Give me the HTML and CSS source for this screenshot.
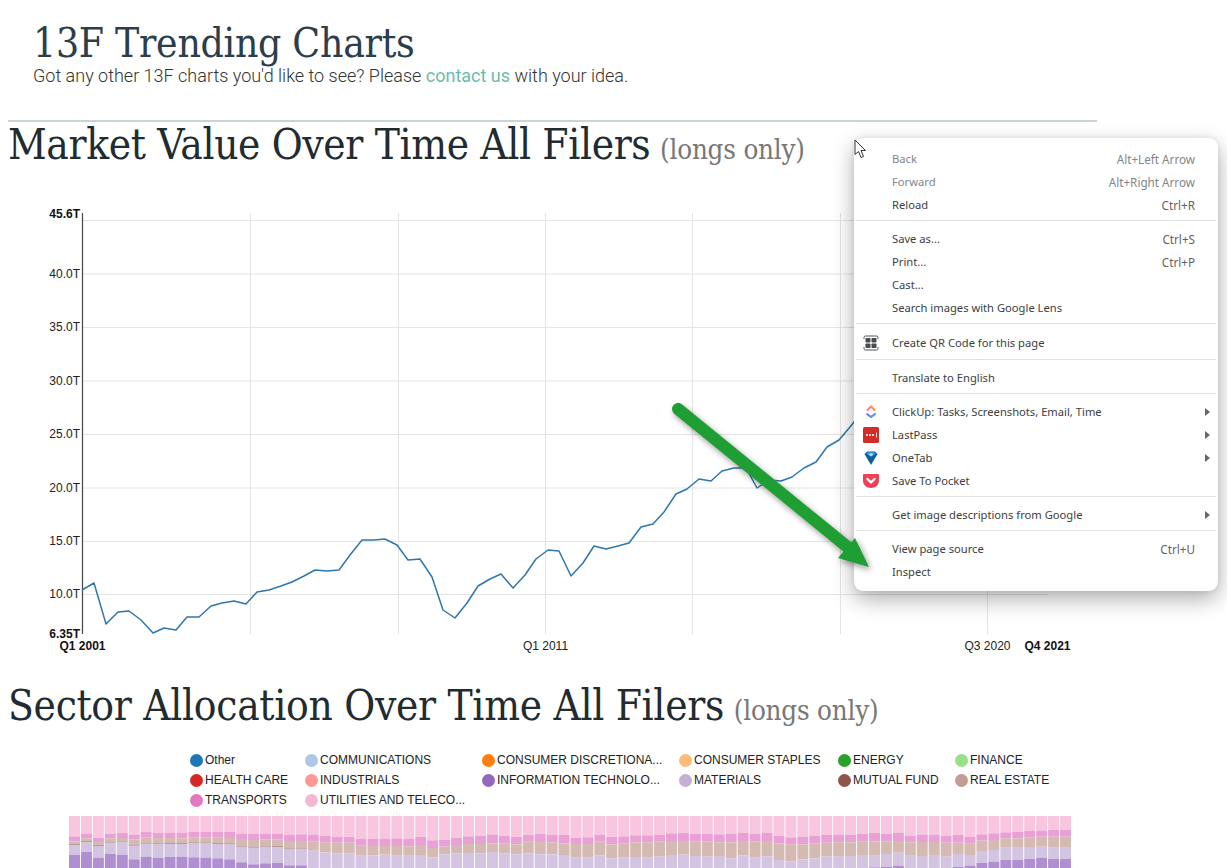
FILE: index.html
```html
<!DOCTYPE html>
<html lang="en">
<head>
<meta charset="utf-8">
<title>13F Trending Charts</title>
<link rel="stylesheet" href="styles.css">
</head>
<body>
<main class="page">
  <header class="intro">
    <h1>13F Trending Charts</h1>
    <p>Got any other 13F charts you'd like to see? Please <a href="#">contact us</a> with your idea.</p>
  </header>
  <hr class="rule">
  <h2 class="section-title">Market Value Over Time All Filers <small>(longs only)</small></h2>
  <svg class="line-chart" viewBox="0 0 1100 465" aria-label="Market value chart">
    <g transform="translate(0,-190)">
      <g class="grid">
        <path d="M82 220.500H1048M82 274H1048M82 327.500H1048M82 381H1048M82 434.500H1048M82 488H1048M82 541.500H1048M82 594.500H1048"/>
        <path d="M250.500 213V634M398.500 213V634M545.500 213V634M692.500 213V634M840.500 213V634M987.500 213V634"/>
      </g>
      <path class="axis" d="M82.500 213V634"/>
      <polyline class="series" points="82,590 94,583 106,624 118,612 129,611 141,620 153,633 164,628 176,630 187,617 199,617 211,606 222,603 234,601 246,604 257,592 269,590 281,586 292,582 304,576 315,570 327,571 339,570 350,555 362,540 374,540 385,539 397,545 408,560 420,559 432,577 443,610 455,618 467,603 478,586 490,579 501,574 513,588 525,575 536,559 548,550 559,551 571,576 583,563 594,546 606,549 618,546 629,543 641,527 653,524 664,512 676,494 687,489 699,479 711,481 722,471 734,468 746,468 757,488 769,480 781,481 792,477 804,468 816,462 827,447 839,440 850,427 862,412 874,400 900,380"/>
      <g class="y-labels">
        <text class="strong" x="80" y="218">45.6T</text>
        <text x="80" y="278">40.0T</text>
        <text x="80" y="331">35.0T</text>
        <text x="80" y="385">30.0T</text>
        <text x="80" y="438">25.0T</text>
        <text x="80" y="492">20.0T</text>
        <text x="80" y="545">15.0T</text>
        <text x="80" y="598">10.0T</text>
        <text class="strong" x="80" y="638">6.35T</text>
      </g>
      <g class="x-labels">
        <text class="strong" x="82.500" y="650">Q1 2001</text>
        <text x="545.500" y="650">Q1 2011</text>
        <text x="987.500" y="650">Q3 2020</text>
        <text class="strong" x="1047.500" y="650">Q4 2021</text>
      </g>
    </g>
  </svg>
  <h2 class="section-title sector">Sector Allocation Over Time All Filers <small>(longs only)</small></h2>
  <ul class="legend">
    <li><i class="c1"></i>Other</li>
    <li><i class="c2"></i>COMMUNICATIONS</li>
    <li><i class="c3"></i>CONSUMER DISCRETIONA...</li>
    <li><i class="c4"></i>CONSUMER STAPLES</li>
    <li><i class="c5"></i>ENERGY</li>
    <li><i class="c6"></i>FINANCE</li>
    <li><i class="c7"></i>HEALTH CARE</li>
    <li><i class="c8"></i>INDUSTRIALS</li>
    <li><i class="c9"></i>INFORMATION TECHNOLO...</li>
    <li><i class="c10"></i>MATERIALS</li>
    <li><i class="c11"></i>MUTUAL FUND</li>
    <li><i class="c12"></i>REAL ESTATE</li>
    <li><i class="c13"></i>TRANSPORTS</li>
    <li><i class="c14"></i>UTILITIES AND TELECO...</li>
  </ul>
  <svg id="bars" class="bars" viewBox="0 0 1227 58" aria-label="Sector allocation chart"></svg>
</main>

<nav class="menu">
  <div class="item off"><span>Back</span><kbd>Alt+Left Arrow</kbd></div>
  <div class="item off"><span>Forward</span><kbd>Alt+Right Arrow</kbd></div>
  <div class="item"><span>Reload</span><kbd>Ctrl+R</kbd></div>
  <div class="sep"></div>
  <div class="item"><span>Save as...</span><kbd>Ctrl+S</kbd></div>
  <div class="item"><span>Print...</span><kbd>Ctrl+P</kbd></div>
  <div class="item"><span>Cast...</span></div>
  <div class="item"><span>Search images with Google Lens</span></div>
  <div class="sep"></div>
  <div class="item tall">
    <svg class="ico" viewBox="0 0 16 16"><path class="qr-frame" d="M1 4V2.500Q1 1 2.500 1H13.500Q15 1 15 2.500V4M1 12V13.500Q1 15 2.500 15H13.500Q15 15 15 13.500V12"/><rect class="qr" x="2.500" y="3" width="5" height="4.500" rx=".7"/><rect class="qr" x="8.500" y="3" width="5" height="4.500" rx=".7"/><rect class="qr" x="2.500" y="8.500" width="5" height="4.500" rx=".7"/><rect class="qr" x="8.500" y="8.500" width="5" height="4.500" rx=".7"/></svg>
    <span>Create QR Code for this page</span>
  </div>
  <div class="sep"></div>
  <div class="item"><span>Translate to English</span></div>
  <div class="sep"></div>
  <div class="item sub">
    <svg class="ico" viewBox="0 0 16 16"><path class="cu-a" d="M4.500 6 8 2.500 11.500 6"/><path class="cu-d" d="M8 2.500 11.500 6"/><path class="cu-b" d="M4 10 8 13 12 10"/><path class="cu-c" d="M8 13 12 10"/></svg>
    <span>ClickUp: Tasks, Screenshots, Email, Time</span><b class="caret"></b>
  </div>
  <div class="item sub">
    <svg class="ico" viewBox="0 0 16 16"><rect class="lp" width="16" height="16" rx="1.500"/><circle class="wh" cx="4" cy="8" r="1"/><circle class="wh" cx="7" cy="8" r="1"/><circle class="wh" cx="10" cy="8" r="1"/><rect class="wh" x="13" y="5.500" width=".9" height="5"/></svg>
    <span>LastPass</span><b class="caret"></b>
  </div>
  <div class="item sub">
    <svg class="ico" viewBox="0 0 16 16"><path class="ot-dark" d="M1.500 4 4 1.500H12L14.500 4 8 15Z"/><path class="ot-mid" d="M3 3.500 5 2H11L13 3.500 8 6.500Z"/><path class="ot-light" d="M5.500 4.500 8 6.500 10.500 4.500 8 3Z"/></svg>
    <span>OneTab</span><b class="caret"></b>
  </div>
  <div class="item">
    <svg class="ico" viewBox="0 0 16 16"><path class="pk" d="M1 1H15Q16 1 16 2V7.500C16 12 12.500 15 8 15S0 12 0 7.500V2Q0 1 1 1Z"/><path class="pk-v" d="M4.500 6 8 9.500 11.500 6"/></svg>
    <span>Save To Pocket</span>
  </div>
  <div class="sep"></div>
  <div class="item sub"><span>Get image descriptions from Google</span><b class="caret"></b></div>
  <div class="sep"></div>
  <div class="item"><span>View page source</span><kbd>Ctrl+U</kbd></div>
  <div class="item"><span>Inspect</span></div>
</nav>

<svg class="arrow" viewBox="0 0 210 175" aria-hidden="true">
  <path class="arrow-line" d="M6 6 178 146"/>
  <path class="arrow-head" d="M166 155 183 135 197 164Z"/>
</svg>
<svg class="cursor" viewBox="0 0 13 20" aria-hidden="true"><path d="M1 1V15.500L4.500 12.500 7 18.500 9.500 17.500 7 11.500H11.500Z"/></svg>
<script src="chart.js"></script>
</body>
</html>
```
FILE: styles.css
```css
html, body { margin: 0; height: 868px; overflow: hidden; background: #fff; }
body { font-family: "Liberation Sans", Arial, sans-serif; color: #222; position: relative; }
.page { display: flex; flex-direction: column; align-items: flex-start; }

.intro { padding: 21px 0 0 33px; height: 99px; box-sizing: border-box; }
.intro h1 {
  margin: 0; font: 400 40.500px/44px "DejaVu Serif Condensed", "DejaVu Serif", serif;
  color: #2c3e4a; letter-spacing: -.3px;
}
.intro p {
  margin: 0; font: 300 18px/22px Roboto, sans-serif; color: #333;
}
.intro a { color: #6cbcaa; text-decoration: none; font-weight: 400; }

.rule { width: 1089px; height: 2px; margin: 21px 0 0 8px; border: 0; background: #c9d4d6; }

.section-title {
  margin: 0 0 0 8px; height: 50px;
  font: 400 42px/46px "DejaVu Serif Condensed", "DejaVu Serif", serif;
  color: #212b30; white-space: nowrap; letter-spacing: -.36px;
}
.section-title small { font-size: 27.500px; color: #777; letter-spacing: -.2px; margin-left: -2px; }
.section-title.sector { margin-top: 28px; margin-bottom: 17px; letter-spacing: -.3px; }

.line-chart { display: block; width: 1100px; height: 465px; margin-top: 18px; }
.grid path { fill: none; stroke: #e4e4e4; stroke-width: 1; }
.axis { fill: none; stroke: #444; stroke-width: 1.2; }
.series { fill: none; stroke: #2f77ab; stroke-width: 1.5; stroke-linejoin: round; }
.y-labels text { font: 12px "Liberation Sans", sans-serif; text-anchor: end; fill: #222; }
.x-labels text { font: 12px "Liberation Sans", sans-serif; text-anchor: middle; fill: #222; }
.line-chart .strong { font-weight: 700; fill: #111; }

.legend {
  list-style: none; margin: 0; padding: 0 0 0 190px; height: 60px; box-sizing: border-box;
  display: grid; grid-template-columns: 115px 177px 197px 159px 117px 100px;
  grid-auto-rows: 20px; font-size: 12px; color: #222; width: 1100px;
}
.legend li { display: flex; align-items: center; gap: 2px; white-space: nowrap; }
.legend i { width: 13px; height: 13px; border-radius: 50%; flex: none; }
.c1 { background: #1f77b4; } .c2 { background: #aec7e8; } .c3 { background: #ff7f0e; }
.c4 { background: #ffbb78; } .c5 { background: #2ca02c; } .c6 { background: #98df8a; }
.c7 { background: #d62728; } .c8 { background: #ff9896; } .c9 { background: #9467bd; }
.c10 { background: #c5b0d5; } .c11 { background: #8c564b; } .c12 { background: #c49c94; }
.c13 { background: #e377c2; } .c14 { background: #f7b6d2; }

.bars { display: block; width: 1227px; height: 58px; }
.b-util { fill: #f8c6df; } .b-trans { fill: #e9a0d5; } .b-real { fill: #d5bab3; }
.b-mutual { fill: #a98f88; } .b-mat { fill: #d3c4e2; } .b-info { fill: #b08fd1; }

.menu {
  position: absolute; left: 854px; top: 138px; width: 364px; height: 453px; box-sizing: border-box;
  padding: 9px 2px 0; background: #fff; border-radius: 9px;
  box-shadow: 0 8px 22px rgba(0,0,0,.32), 0 0 6px rgba(0,0,0,.08);
  font: 11.200px "Noto Sans", sans-serif; color: #3c4043;
}
.item { position: relative; height: 23px; display: flex; align-items: center; justify-content: space-between; padding: 0 21px 0 36px; }
.item.tall { height: 25px; }
.item.off, .item.off kbd { color: #80858a; }
.item kbd { font: 11.700px "Noto Sans", sans-serif; color: #5f6368; }
.sep { height: 1px; margin: 4px 0 6px; background: #dfe1e4; }
.ico { position: absolute; left: 7px; top: 50%; width: 16px; height: 16px; margin-top: -8px; }
.caret { position: absolute; right: 6px; top: 50%; margin-top: -4px; border-left: 5px solid #666; border-top: 4px solid transparent; border-bottom: 4px solid transparent; }

.qr-frame { fill: none; stroke: #555; stroke-width: 1; }
.qr { fill: #4a4d50; }
.cu-a, .cu-b, .cu-c, .cu-d { fill: none; stroke-width: 1.800; stroke-linecap: round; stroke-linejoin: round; }
.cu-a { stroke: #fd71af; } .cu-d { stroke: #ff9a3c; }
.cu-b { stroke: #7b68ee; } .cu-c { stroke: #49a6f9; }
.lp { fill: #d32d27; } .wh { fill: #fff; }
.ot-dark { fill: #0f5f9e; } .ot-mid { fill: #2b9ce0; } .ot-light { fill: #a9e2fb; }
.pk { fill: #ef4056; }
.pk-v { fill: none; stroke: #fff; stroke-width: 2.400; stroke-linecap: round; stroke-linejoin: round; }

.arrow { position: absolute; left: 672px; top: 403px; width: 210px; height: 175px; overflow: visible; filter: drop-shadow(2px 3px 3px rgba(0,0,0,.4)); }
.arrow-line { fill: none; stroke: #1f9e33; stroke-width: 12; stroke-linecap: round; }
.arrow-head { fill: #1f9e33; }
.cursor { position: absolute; left: 854px; top: 139px; width: 13px; height: 20px; }
.cursor path { fill: #fff; stroke: #333; stroke-width: 1; stroke-linejoin: round; }
```
FILE: chart.js
```js
// Zoomed boundary readings per quarter: transports top, real estate top, materials top, information top.
var rows = [
  [274,289,300,330],[266,280,291,321],[279,291,303,338],[267,280,293,327],[264,279,290,329],
  [269,283,302,343],[261,278,296,335],[264,279,298,339],[264,279,297,336],[264,280,297,335],
  [261,278,295,337],[261,278,293,338],[261,278,297,340],[261,279,298,343],[266,282,305,352],
  [266,285,308,358],[266,283,305,355],[266,284,306,354],[270,288,313,361],[268,288,311,361],
  [269,290,317],[273,293,322],[276,293,325],[276,293,325],[282,302,332],[282,303,331],
  [282,303,329],[280,303,332],[282,304,332],[276,300,330],[286,309,337],[285,305,328],
  [279,300,325],[274,297,324],[273,297,325],[269,295,321],[273,295,325],[276,298,328],
  [270,290,325],[267,291,328],[270,292,328],[270,295,330],
  [279,297,338],[277,297,338],[269,290,331],[276,298,340],[274,295,337],[271,292,336],
  [271,292,338],[270,290,335],[265,288,330],[264,288,329],[267,290,333],[267,290,335],
  [268,292,333],[266,292,340],[264,288,331],[266,290,338],[264,288,334],[273,295,345],
  [277,298,349],[275,298,343],[272,295,340],[270,293,335],[269,292,335],[270,292,333],
  [266,290,330],[264,289,332,367],[266,290,327,365],[264,288,323,362],[272,292,332],
  [269,291,333],[269,291,330],[272,293,335],[270,293,327,366],[276,296,330,362],
  [268,287,318,354],[265,285,315,350],[262,280,308,345],[260,280,308,345],[258,278,306,342],
  [257,275,305,338],[255,275,308,342],[255,275,308,342]
];
var svg = document.getElementById('bars');
var NS = 'http://www.w3.org/2000/svg';
var BOTTOM = 60;
function y(z) { return z / 3 - 65; }
function seg(cls, x, top, bottom) {
  var r = document.createElementNS(NS, 'rect');
  r.setAttribute('class', cls);
  r.setAttribute('x', x);
  r.setAttribute('y', top);
  r.setAttribute('width', 11);
  r.setAttribute('height', Math.max(0, bottom - top));
  svg.appendChild(r);
}
rows.forEach(function (r, i) {
  var x = 69 + i * 11.94;
  seg('b-util', x, 6, y(r[0]));
  seg('b-trans', x, y(r[0]), y(r[1]));
  seg('b-real', x, y(r[1]), y(r[2]));
  if (i < 20) seg('b-mutual', x, y(r[2]) - 0.7, y(r[2]));
  seg('b-mat', x, y(r[2]), r[3] ? y(r[3]) : BOTTOM);
  if (r[3]) seg('b-info', x, y(r[3]), BOTTOM);
});
```
